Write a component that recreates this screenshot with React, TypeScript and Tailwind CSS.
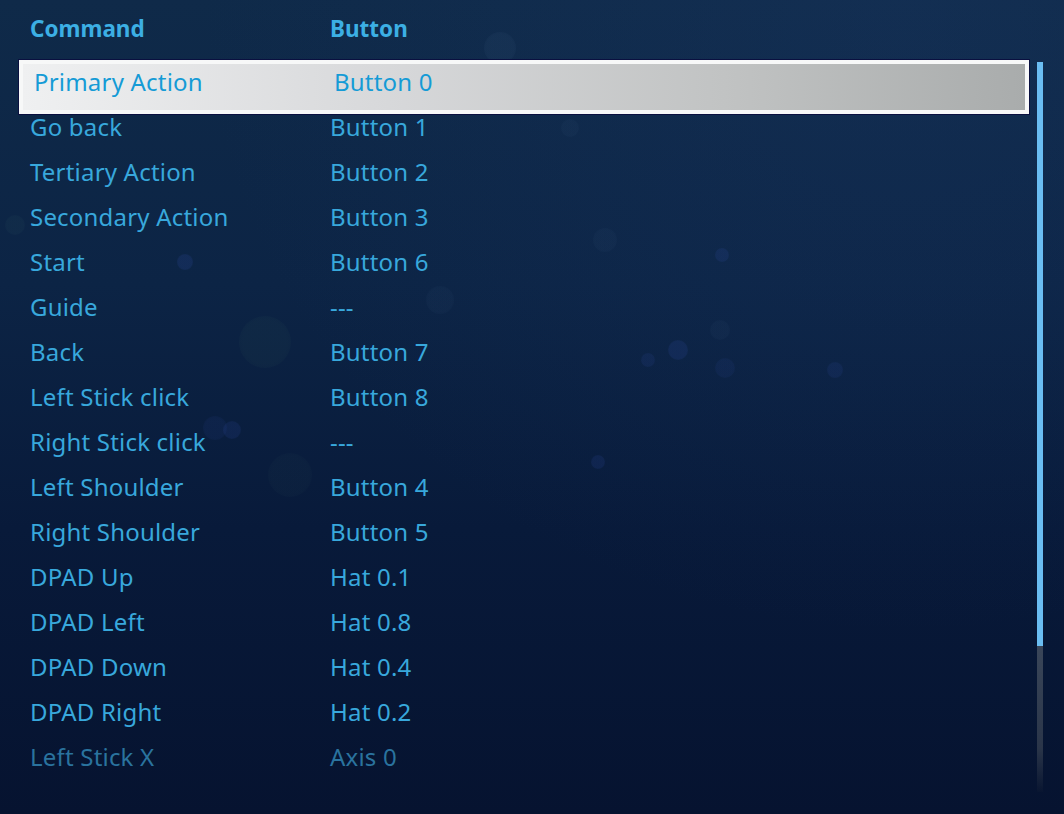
import React from 'react'

type Binding = { command: string; button: string }

const bindings: Binding[] = [
    { command: 'Primary Action', button: 'Button 0' },
    { command: 'Go back', button: 'Button 1' },
    { command: 'Tertiary Action', button: 'Button 2' },
    { command: 'Secondary Action', button: 'Button 3' },
    { command: 'Start', button: 'Button 6' },
    { command: 'Guide', button: '---' },
    { command: 'Back', button: 'Button 7' },
    { command: 'Left Stick click', button: 'Button 8' },
    { command: 'Right Stick click', button: '---' },
    { command: 'Left Shoulder', button: 'Button 4' },
    { command: 'Right Shoulder', button: 'Button 5' },
    { command: 'DPAD Up', button: 'Hat 0.1' },
    { command: 'DPAD Left', button: 'Hat 0.8' },
    { command: 'DPAD Down', button: 'Hat 0.4' },
    { command: 'DPAD Right', button: 'Hat 0.2' },
    { command: 'Left Stick X', button: 'Axis 0' },
]

// faint bokeh dots in the backdrop
const dots = [
    { x: 500, y: 48, r: 16, c: 'rgba(120,160,200,0.05)' },
    { x: 265, y: 342, r: 26, c: 'rgba(90,150,110,0.05)' },
    { x: 290, y: 475, r: 22, c: 'rgba(90,140,120,0.04)' },
    { x: 185, y: 262, r: 8, c: 'rgba(60,90,200,0.14)' },
    { x: 678, y: 350, r: 10, c: 'rgba(60,90,200,0.13)' },
    { x: 648, y: 360, r: 7, c: 'rgba(60,90,200,0.1)' },
    { x: 722, y: 255, r: 7, c: 'rgba(60,90,200,0.12)' },
    { x: 835, y: 370, r: 8, c: 'rgba(60,90,200,0.1)' },
    { x: 598, y: 462, r: 7, c: 'rgba(60,90,200,0.12)' },
    { x: 725, y: 368, r: 10, c: 'rgba(60,90,200,0.08)' },
    { x: 440, y: 300, r: 14, c: 'rgba(120,160,200,0.035)' },
    { x: 605, y: 240, r: 12, c: 'rgba(120,160,200,0.035)' },
    { x: 15, y: 225, r: 10, c: 'rgba(90,150,130,0.05)' },
    { x: 232, y: 430, r: 9, c: 'rgba(60,90,200,0.12)' },
    { x: 215, y: 428, r: 12, c: 'rgba(60,90,200,0.08)' },
    { x: 720, y: 330, r: 10, c: 'rgba(120,160,200,0.035)' },
    { x: 570, y: 128, r: 9, c: 'rgba(120,160,200,0.035)' },
]

export default function App() {
    return (
        <div
            className="relative w-[1064px] h-[814px] overflow-hidden bg-[linear-gradient(180deg,#0f2a49_0%,#0c2445_35%,#081a3a_65%,#061330_100%)]"
            style={{ fontFamily: '"Noto Sans", "Open Sans", sans-serif' }}
        >
            {/* backdrop glow */}
            <div className="absolute inset-0 bg-[radial-gradient(ellipse_at_85%_0%,rgba(30,60,110,0.25),transparent_55%)]" />
            {dots.map((d, i) => (
                <div
                    key={i}
                    className="absolute rounded-full"
                    style={{ left: d.x - d.r, top: d.y - d.r, width: d.r * 2, height: d.r * 2, background: `radial-gradient(circle, ${d.c} 0%, ${d.c} 60%, transparent 100%)` }}
                />
            ))}

            <div className="relative pt-[6px] pl-[30px] pr-[35px]">
                {/* Header */}
                <div className="grid grid-cols-[300px_1fr] h-[45px] items-center text-[22.5px] leading-[45px] font-bold text-[#3cafe4]">
                    <span>Command</span>
                    <span>Button</span>
                </div>

                {/* Rows */}
                <div className="mt-[8px]">
                    {bindings.map((b, i) => {
                        const selected = i === 0
                        const dim = i === bindings.length - 1
                        return (
                            <div key={b.command} className="relative h-[45px]">
                                {selected && (
                                    <div className="absolute -left-[12px] -right-[1px] top-0 h-[56px] border border-[#0a1040] bg-[#f7f8f8] p-[4px]">
                                        <div className="h-full bg-[linear-gradient(90deg,#eff0f1_0%,#d8d9db_35%,#c1c3c3_70%,#a9acac_100%)]" />
                                    </div>
                                )}
                                <div
                                    className={`relative grid grid-cols-[300px_1fr] h-[45px] items-center text-[24px] leading-[45px] tracking-[0.2px] ${
                                        selected ? 'pl-[4px] text-[#159bd6]' : dim ? 'text-[#2a739e]' : 'text-[#38a8dc]'
                                    }`}
                                >
                                    <span>{b.command}</span>
                                    <span>{b.button}</span>
                                </div>
                            </div>
                        )
                    })}
                </div>
            </div>

            {/* Scrollbar */}
            <div className="absolute left-[1037px] top-[62px] w-[6px] h-[730px] flex flex-col">
                <div className="h-[584px] bg-[#6abdf2]" />
                <div className="flex-1 bg-[linear-gradient(180deg,#3a4659_0%,#2a3549_70%,rgba(20,30,50,0.2)_100%)]" />
            </div>
        </div>
    )
}
